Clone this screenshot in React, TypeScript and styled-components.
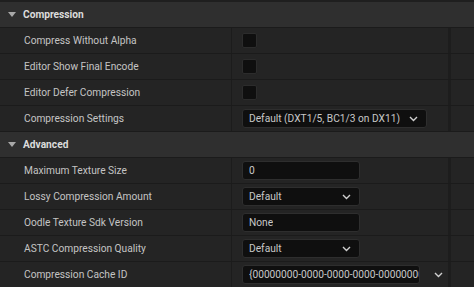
import React from 'react';
import styled, { createGlobalStyle } from 'styled-components';

const Global = createGlobalStyle`
  html, body {
    margin: 0;
    padding: 0;
    background: #242424;
  }
  body {
    font-family: Roboto, "Noto Sans", sans-serif;
    -webkit-font-smoothing: antialiased;
  }
`;

const Panel = styled.div`
  width: 474px;
  height: 287px;
  overflow: hidden;
  padding-top: 2px;
  box-sizing: border-box;
  background: #1f1f1f;
`;

const CategoryRow = styled.div`
  height: 25px;
  display: flex;
  align-items: center;
  background: #2f2f2f;
  border-bottom: 1px solid #1b1b1b;
  padding-left: 8px;
  gap: 7px;
  color: #dcdcdc;
  font-size: 10.2px;
  font-weight: 700;
`;

const Caret = styled.span`
  width: 0;
  height: 0;
  border-left: 4.5px solid transparent;
  border-right: 4.5px solid transparent;
  border-top: 5px solid #a8a8a8;
`;

const Row = styled.div`
  height: 25px;
  display: flex;
  background: #242424;
  border-bottom: 1px solid #1b1b1b;
`;

const NameCell = styled.div`
  width: 232px;
  display: flex;
  align-items: center;
  padding-left: 24px;
  box-sizing: border-box;
  border-right: 1px solid #1c1c1c;
  color: #c4c4c4;
  font-size: 10.2px;
`;

const ValueCell = styled.div`
  width: 219px;
  display: flex;
  align-items: center;
  gap: 8px;
  padding-left: 10px;
  box-sizing: border-box;
  border-right: 3px solid #1d1d1d;
`;

const ResetCell = styled.div`
  flex: 1;
`;

const Check = styled.div`
  width: 15px;
  height: 15px;
  box-sizing: border-box;
  background: #0f0f0f;
  border: 1px solid #2c2c2c;
  border-radius: 2px;
`;

const Field = styled.div<{ $w: number; $open?: boolean }>`
  width: ${p => p.$w}px;
  height: 19px;
  box-sizing: border-box;
  display: flex;
  align-items: center;
  justify-content: ${p => (p.$open ? 'flex-start' : 'space-between')};
  padding: ${p => (p.$open ? '0 0 0 6px' : '0 8px 0 6px')};
  background: #0f0f0f;
  border: 1px solid #2e2e2e;
  border-radius: 3px;
  color: #c8c8c8;
  font-size: 10.2px;
  white-space: nowrap;
  overflow: hidden;
`;

const FieldText = styled.span`
  overflow: hidden;
  white-space: nowrap;
`;

const Chevron = () => (
  <svg width="9" height="6" viewBox="0 0 9 6" style={{ flex: 'none' }}>
    <path d="M1 1l3.5 3.5L8 1" fill="none" stroke="#d0d0d0" strokeWidth="1.4" />
  </svg>
);

const LooseChevron = styled.span`
  display: flex;
  margin-left: 6px;
`;

type Prop =
  | { name: string; kind: 'check' }
  | { name: string; kind: 'combo' | 'text' | 'id'; value: string; w: number };

const compression: Prop[] = [
  { name: 'Compress Without Alpha', kind: 'check' },
  { name: 'Editor Show Final Encode', kind: 'check' },
  { name: 'Editor Defer Compression', kind: 'check' },
  { name: 'Compression Settings', kind: 'combo', value: 'Default (DXT1/5, BC1/3 on DX11)', w: 185 },
];

const advanced: Prop[] = [
  { name: 'Maximum Texture Size', kind: 'text', value: '0', w: 118 },
  { name: 'Lossy Compression Amount', kind: 'combo', value: 'Default', w: 118 },
  { name: 'Oodle Texture Sdk Version', kind: 'text', value: 'None', w: 118 },
  { name: 'ASTC Compression Quality', kind: 'combo', value: 'Default', w: 118 },
  { name: 'Compression Cache ID', kind: 'id', value: '{00000000-0000-0000-0000-000000000000}', w: 178 },
];

const PropRow = ({ p }: { p: Prop }) => (
  <Row>
    <NameCell>{p.name}</NameCell>
    <ValueCell>
      {p.kind === 'check' && <Check />}
      {p.kind === 'combo' && (
        <Field $w={p.w}>
          <FieldText>{p.value}</FieldText>
          <Chevron />
        </Field>
      )}
      {p.kind === 'text' && (
        <Field $w={p.w}>
          <FieldText>{p.value}</FieldText>
        </Field>
      )}
      {p.kind === 'id' && (
        <>
          <Field $w={p.w} $open>
            <FieldText>{p.value}</FieldText>
          </Field>
          <LooseChevron>
            <Chevron />
          </LooseChevron>
        </>
      )}
    </ValueCell>
    <ResetCell />
  </Row>
);

export default function App() {
  return (
    <Panel>
      <Global />
      <CategoryRow>
        <Caret />
        Compression
      </CategoryRow>
      {compression.map(p => (
        <PropRow key={p.name} p={p} />
      ))}
      <CategoryRow>
        <Caret />
        Advanced
      </CategoryRow>
      {advanced.map(p => (
        <PropRow key={p.name} p={p} />
      ))}
    </Panel>
  );
}
